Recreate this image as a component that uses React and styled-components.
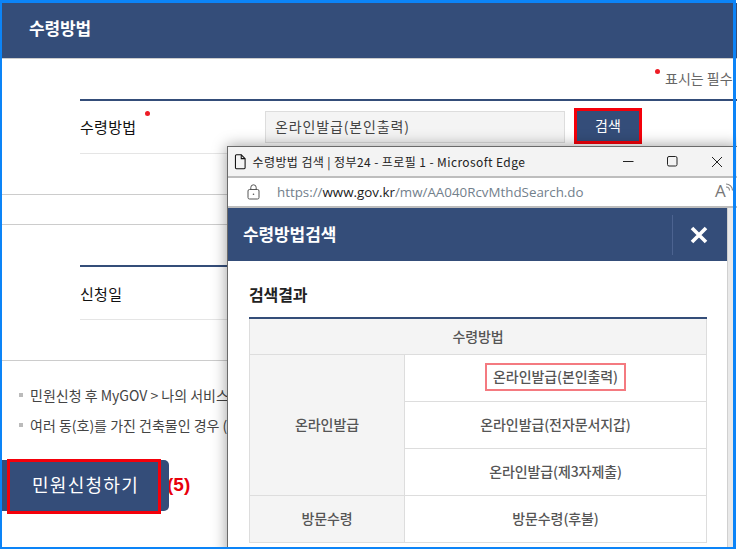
import React from 'react'
import styled, { createGlobalStyle } from 'styled-components'

const navy = '#344d79'
const KR = `"Noto Sans CJK KR", "Noto Sans", sans-serif`

const GlobalStyle = createGlobalStyle`
	html, body {
		margin: 0;
		padding: 0;
		background: #fff;
	}
	*, *::before, *::after {
		box-sizing: border-box;
	}
`

const Page = styled.div`
	position: relative;
	width: 737px;
	height: 549px;
	overflow: hidden;
	background: #fff;
	padding: 3px 0 0 2px;
	font-family: ${KR};
	color: #333;
`

// capture frame drawn over everything
const CaptureFrame = styled.div`
	position: absolute;
	top: 0;
	left: 0;
	width: 736px;
	height: 549px;
	border: solid #0c84f7;
	border-width: 3px 3px 2.5px 2.5px;
	pointer-events: none;
	z-index: 10;
`

const TopBar = styled.header`
	height: 56px;
	background: ${navy};
	border-bottom: 1px solid #ccc;
	padding: 0 0 7px 27px;
	display: flex;
	align-items: center;
	color: #fff;
	font-size: 17px;
	font-weight: 700;
	letter-spacing: -0.1px;
`

const RequiredNote = styled.div`
	height: 40px;
	width: 731px;
	overflow: hidden;
	padding: 10px 0 0 663px;
	font-size: 14px;
	color: #666;
	white-space: nowrap;
	position: relative;
	line-height: 18px;
`

const Dot = styled.i`
	position: absolute;
	width: 5px;
	height: 5px;
	border-radius: 50%;
	background: #ee1c25;
	left: ${p => p.$left}px;
	top: ${p => p.$top}px;
`

const Field = styled.section`
	margin-left: 78px;
	margin-bottom: ${p => p.$after}px;
	height: ${p => p.$height}px;
	border-top: 2px solid ${navy};
	border-bottom: 1px solid #e5e5e5;
	display: flex;
	align-items: flex-start;
`

const FieldLabel = styled.div`
	position: relative;
	width: 185px;
	padding-top: ${p => p.$top}px;
	font-size: 15px;
	line-height: 20px;
	font-weight: 400;
	color: #111;
	letter-spacing: 0.3px;
`

const ReadOnlyInput = styled.div`
	width: 300px;
	height: 32px;
	margin-top: 10px;
	padding-left: 9px;
	background: #f4f4f4;
	border: 1px solid #ddd;
	font-size: 14px;
	line-height: 29px;
	color: #444;
	letter-spacing: 0.85px;
`

const SearchButton = styled.button`
	width: 68px;
	height: 36px;
	margin: 7px 0 0 9px;
	padding: 0 0 3px;
	background: ${navy};
	border: 3px solid #f4000a;
	color: #fff;
	font-family: inherit;
	font-size: 14px;
`

const Rule = styled.hr`
	margin: 0 0 ${p => p.$after}px;
	border: 0;
	border-top: 1px solid #ccc;
	height: 1px;
`

const NoteList = styled.ul`
	list-style: none;
	margin: 0 0 20px;
	padding: 0 0 0 17px;
`

const NoteItem = styled.li`
	display: flex;
	align-items: center;
	gap: 7px;
	height: 30px;
	font-size: 14px;
	color: #444;
	white-space: nowrap;

	&::before {
		content: '';
		width: 4px;
		height: 4px;
		background: #bbb;
		flex: none;
	}
`

const ActionRow = styled.div`
	display: flex;
	align-items: center;
	height: 51px;
`

const SubmitButton = styled.button`
	position: relative;
	width: 167px;
	height: 51px;
	margin: 0;
	padding: 0 0 4px 0;
	background: ${navy};
	border: 0;
	border-radius: 0 5px 5px 0;
	color: #fff;
	font-family: inherit;
	font-size: 18px;
	letter-spacing: 1.3px;

	&::after {
		content: '';
		position: absolute;
		left: 5px;
		top: -1px;
		width: 154px;
		height: 55px;
		border: 3px solid #f4000a;
	}
`

const StepMark = styled.span`
	margin: 0 0 2px -2px;
	color: #e8000b;
	font-family: 'Liberation Sans', sans-serif;
	font-weight: 700;
	font-size: 19px;
`

// popup browser window, floating on the page
const PopupWindow = styled.div`
	position: absolute;
	left: 227px;
	top: 146px;
	width: 512px;
	height: 410px;
	background: #fff;
	border: 1px solid #6a6a6a;
	border-right: 0;
	box-shadow: 0 0 14px rgba(0, 0, 0, 0.4);
	z-index: 5;
	display: flex;
	flex-direction: column;
`

const WindowTitle = styled.div`
	height: 31px;
	flex: none;
	background: #f3f3f3;
	border-bottom: 2px solid #bdbdbd;
	display: flex;
	align-items: center;
	padding-left: 6px;
	font-size: 12px;
	color: #222;
`

const TitleText = styled.span`
	margin: 0 0 1px 6px;
	width: 366px;
	white-space: nowrap;
	letter-spacing: 0.4px;
`

const WindowControl = styled.span`
	display: flex;
	width: 46px;
	justify-content: center;
`

const AddressBar = styled.div`
	height: 30px;
	flex: none;
	background: #fff;
	border-bottom: 2px solid #bdbdbd;
	display: flex;
	align-items: center;
	padding-left: 19px;
	font-family: 'Open Sans', sans-serif;
	font-size: 13.35px;
	color: #72808c;
	position: relative;
`

const Url = styled.span`
	margin-left: 17px;
	white-space: nowrap;
	b {
		font-weight: 400;
		color: #1a1a1a;
	}
`

const ReadAloud = styled.span`
	position: absolute;
	left: 487px;
	top: 1px;
	font-size: 17px;
	line-height: 24px;
	color: #777;
	display: flex;
	align-items: flex-start;

	svg {
		margin-top: 4px;
	}
`

const PopupBody = styled.div`
	display: flex;
	flex: 1;
	min-height: 0;
`

const PopupContent = styled.div`
	width: 499px;
	flex: none;
`

const PopupScrollGutter = styled.div`
	width: 6px;
	background: #e9e9e9;
	border-left: 1px solid #d0d0d0;
`

const PopupHeader = styled.div`
	height: 53px;
	background: ${navy};
	display: flex;
	align-items: center;
	justify-content: space-between;
	padding: 0 0 2px 15px;
	color: #fff;
	font-size: 17px;
	font-weight: 700;
	letter-spacing: -0.1px;
`

const CloseCell = styled.div`
	width: 55px;
	height: 40px;
	margin-top: 2px;
	padding-right: 2px;
	border-left: 1px solid #4c6390;
	display: flex;
	align-items: center;
	justify-content: center;
`

const ResultTitle = styled.h2`
	margin: 0;
	padding: 22px 0 0 21px;
	height: 56px;
	font-size: 16px;
	line-height: 22px;
	font-weight: 700;
	color: #222;
	letter-spacing: -0.1px;
`

const ResultTable = styled.table`
	margin-left: 21px;
	width: 458px;
	border-collapse: collapse;
	border-top: 2px solid ${navy};
	table-layout: fixed;
	font-size: 14px;
	font-weight: 500;
	color: #555;
	text-align: center;
	letter-spacing: -0.1px;
`

const HeadCell = styled.th`
	height: 36px;
	padding: 0;
	font-weight: 500;
	background: #f4f4f4;
	border: 1px solid #ddd;
	border-top: 0;
`

const SideCell = styled.td`
	padding: 0 0 2px;
	background: #f4f4f4;
	border: 1px solid #ddd;
`

const ValueCell = styled.td`
	height: 47px;
	padding: 0 0 2px;
	border: 1px solid #ddd;
`

const Picked = styled.span`
	display: inline-block;
	padding: 1px 6.5px 2px;
	border: 2px solid #f47a80;
	line-height: 21px;
`

const SideCol = styled.col`
	width: 155px;
`

const PageIcon = () => (
	<svg width="13" height="16" viewBox="0 0 13 16" fill="none" stroke="#111" strokeWidth="1.1">
		<path d="M1.5 1.5a1 1 0 0 1 1-1h5l4 4v9.5a1 1 0 0 1-1 1h-8a1 1 0 0 1-1-1z" />
		<path d="M7.5 .5v4h4" />
	</svg>
)

const LockIcon = () => (
	<svg width="13" height="16" viewBox="0 0 13 16" fill="none" stroke="#555" strokeWidth="1">
		<rect x="1" y="5.5" width="11" height="9.5" rx="1.5" />
		<path d="M3.8 5.5V3.5a2.7 2.7 0 0 1 5.4 0v2" />
		<circle cx="6.5" cy="10.2" r=".8" fill="#555" stroke="none" />
	</svg>
)

const MinIcon = () => (
	<svg width="11" height="11" viewBox="0 0 11 11" stroke="#222">
		<path d="M0 5.5h10.5" />
	</svg>
)

const MaxIcon = () => (
	<svg width="11" height="11" viewBox="0 0 11 11" fill="none" stroke="#222">
		<rect x=".5" y=".5" width="9.5" height="9.5" rx="1.5" />
	</svg>
)

const CloseThinIcon = () => (
	<svg width="12" height="12" viewBox="0 0 12 12" stroke="#222">
		<path d="M1 1l10 10M11 1L1 11" />
	</svg>
)

const CloseBoldIcon = () => (
	<svg width="18" height="18" viewBox="0 0 18 18" stroke="#fff" strokeWidth="3.6">
		<path d="M2 2l14 14M16 2L2 16" />
	</svg>
)

const WavesIcon = () => (
	<svg width="7" height="11" viewBox="0 0 7 11" fill="none" stroke="#888" strokeWidth="1.1">
		<path d="M0 1a6.5 6.5 0 0 1 6.5 6.5M0 4a3.5 3.5 0 0 1 3.5 3.5" />
	</svg>
)

const App = () => {
	return (
		<>
			<GlobalStyle />
			<Page>
				<TopBar>수령방법</TopBar>
				<RequiredNote>
					<Dot $left={653} $top={9.5} />
					표시는 필수 입력항목입니다
				</RequiredNote>
				<Field $height={55} $after={40}>
					<FieldLabel $top={16}>
						수령방법
						<Dot $left={65} $top={10} />
					</FieldLabel>
					<ReadOnlyInput>온라인발급(본인출력)</ReadOnlyInput>
					<SearchButton>검색</SearchButton>
				</Field>
				<Rule $after={29} />
				<Rule $after={40} />
				<Field $height={55} $after={40}>
					<FieldLabel $top={17}>신청일</FieldLabel>
				</Field>
				<Rule $after={19} />
				<NoteList>
					<NoteItem>민원신청 후 MyGOV &gt; 나의 서비스</NoteItem>
					<NoteItem>여러 동(호)를 가진 건축물인 경우 (</NoteItem>
				</NoteList>
				<ActionRow>
					<SubmitButton>민원신청하기</SubmitButton>
					<StepMark>(5)</StepMark>
				</ActionRow>

				<PopupWindow>
					<WindowTitle>
						<PageIcon />
						<TitleText>수령방법 검색 | 정부24 - 프로필 1 - Microsoft Edge</TitleText>
						<WindowControl><MinIcon /></WindowControl>
						<WindowControl><MaxIcon /></WindowControl>
						<WindowControl><CloseThinIcon /></WindowControl>
					</WindowTitle>
					<AddressBar>
						<LockIcon />
						<Url>
							https://<b>www.gov.kr</b>/mw/AA040RcvMthdSearch.do
						</Url>
						<ReadAloud>
							A
							<WavesIcon />
						</ReadAloud>
					</AddressBar>
					<PopupBody>
						<PopupContent>
							<PopupHeader>
								수령방법검색
								<CloseCell>
									<CloseBoldIcon />
								</CloseCell>
							</PopupHeader>
							<ResultTitle>검색결과</ResultTitle>
							<ResultTable>
								<colgroup>
									<SideCol />
									<col />
								</colgroup>
								<thead>
									<tr>
										<HeadCell colSpan={2}>수령방법</HeadCell>
									</tr>
								</thead>
								<tbody>
									<tr>
										<SideCell rowSpan={3}>온라인발급</SideCell>
										<ValueCell>
											<Picked>온라인발급(본인출력)</Picked>
										</ValueCell>
									</tr>
									<tr>
										<ValueCell>온라인발급(전자문서지갑)</ValueCell>
									</tr>
									<tr>
										<ValueCell>온라인발급(제3자제출)</ValueCell>
									</tr>
									<tr>
										<SideCell>방문수령</SideCell>
										<ValueCell>방문수령(후불)</ValueCell>
									</tr>
								</tbody>
							</ResultTable>
						</PopupContent>
						<PopupScrollGutter />
					</PopupBody>
				</PopupWindow>
				<CaptureFrame />
			</Page>
		</>
	)
}

export default App
